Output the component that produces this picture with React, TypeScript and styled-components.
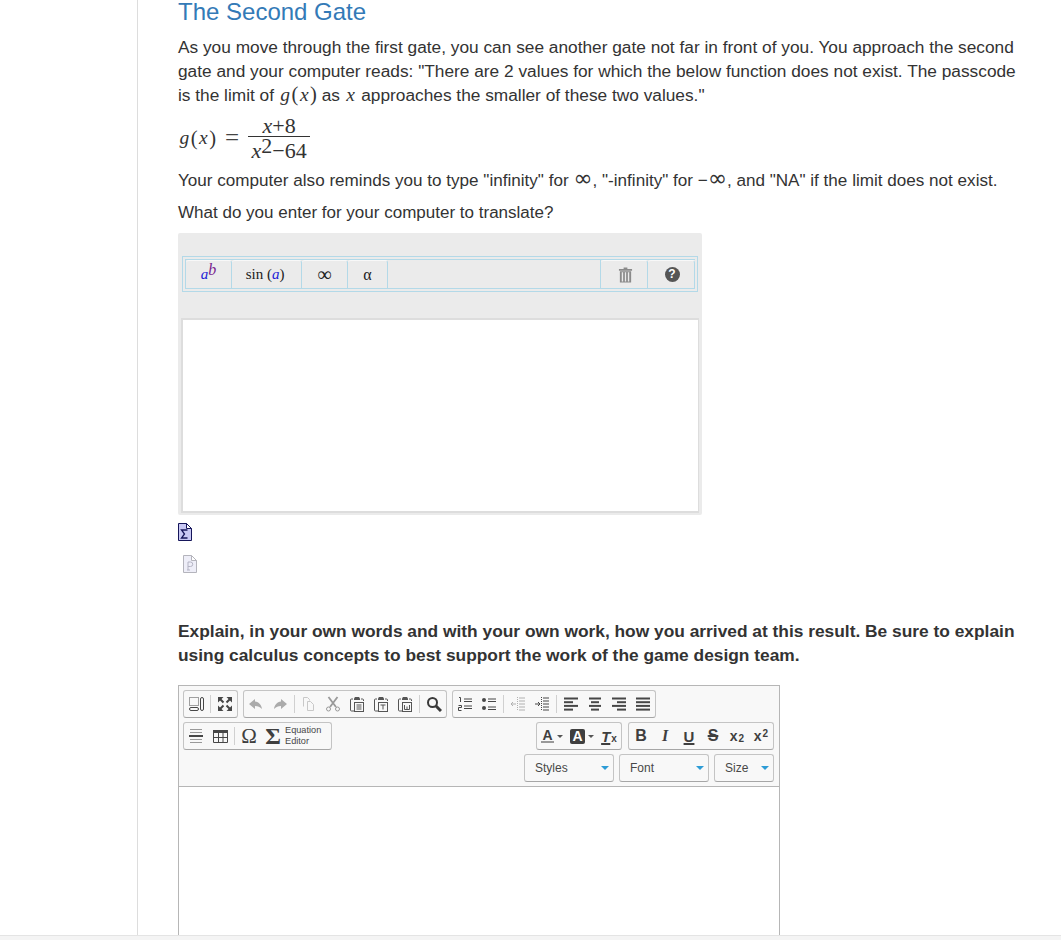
import React from "react";
import styled, { createGlobalStyle } from "styled-components";

const GlobalStyle = createGlobalStyle`
  html, body { margin: 0; padding: 0; height: 100%; background: #fff; }
  body { font-family: "Liberation Sans", Arial, sans-serif; color: #333; }
  #root { height: 100%; }
`;

const Page = styled.div`
  display: flex;
  flex-direction: column;
  height: 940px;
  overflow: hidden;
`;
const Main = styled.div`
  flex: 1;
  min-height: 0;
  display: flex;
  overflow: hidden;
`;
const Sidebar = styled.aside`
  width: 137px;
  flex: none;
  border-right: 1px solid #ddd;
`;
const Content = styled.main`
  width: 840px;
  margin-left: 40px;
  flex: none;
`;
const Footer = styled.footer`
  height: 4px;
  flex: none;
  background: #f4f4f4;
  border-top: 1px solid #e4e4e4;
`;
const Title = styled.h2`
  margin: 0;
  height: 35px;
  font-size: 24px;
  font-weight: 400;
  line-height: 24px;
  color: #337ab7;
`;
const Para = styled.p<{ $mb?: number; $size?: number }>`
  margin: 0 0 ${(p) => p.$mb ?? 8}px;
  font-size: ${(p) => p.$size ?? 17.3}px;
  line-height: 24px;
`;
const Line = styled.span`
  display: block;
  white-space: nowrap;
`;
const Bold = styled(Para)`
  font-size: 17.35px;
  font-weight: 700;
  margin: 0 0 18px;
`;
const Mi = styled.i`
  font-family: "Liberation Serif", serif;
  font-size: 19.5px;
  line-height: 0;
  padding: 0 1.5px;
`;
const Paren = styled.span`
  font-family: "Liberation Serif", serif;
  font-size: 20.5px;
  line-height: 0;
`;
const Formula = styled.div`
  display: flex;
  align-items: center;
  height: 45px;
  margin-bottom: 9px;
  font-family: "Liberation Serif", serif;
  font-size: 22px;
`;
const Equals = styled.span`
  margin: 0 9px 0 9px;
  font-size: 25px;
  color: #444;
`;
const Fraction = styled.span`
  display: inline-flex;
  flex-direction: column;
  align-items: center;
  width: 62px;
`;
const Num = styled.span`
  line-height: 23px;
  height: 22px;
  border-bottom: 1px solid #333;
  align-self: stretch;
  text-align: center;
`;
const Den = styled.span`
  line-height: 28px;
  height: 24px;
  white-space: nowrap;
  sup {
    font-size: 22px;
    line-height: 0;
    vertical-align: 5px;
  }
`;
const Inf = styled.span`
  font-family: "DejaVu Sans", sans-serif;
  font-size: 23px;
  line-height: 0;
`;

const MathBox = styled.section`
  width: 524px;
  height: 282px;
  margin-top: 8px;
  padding: 23px 3px 2px;
  box-sizing: border-box;
  background: #ebebeb;
  border-radius: 2px;
  display: flex;
  flex-direction: column;
`;
const MathBar = styled.div`
  margin: 0 1px;
  height: 36px;
  box-sizing: border-box;
  padding: 2px;
  border: 1px solid #b3d9e8;
`;
const MathRow = styled.div`
  display: flex;
  height: 100%;
  box-sizing: border-box;
  border: 1px solid #b3d9e8;
  border-right: 0;
`;
const MathBtn = styled.div<{ $w: number; $pl?: number; $pr?: number; $size?: number }>`
  width: ${(p) => p.$w}px;
  flex: none;
  display: flex;
  align-items: center;
  justify-content: center;
  box-sizing: border-box;
  padding: 0 ${(p) => p.$pr ?? 0}px 0 ${(p) => p.$pl ?? 0}px;
  border-right: 1px solid #b3d9e8;
  border-top: 1px solid #f8f8f8;
  border-radius: 3px 3px 0 0;
  font-family: "Liberation Serif", serif;
  font-size: ${(p) => p.$size ?? 15}px;
  color: #222;
`;
const MathGap = styled.div`
  flex: 1;
  border-right: 1px solid #b3d9e8;
`;
const Var = styled.i<{ $c: string }>`
  color: ${(p) => p.$c};
`;
const Power = styled.span`
  font-size: 15px;
  font-style: italic;
  color: #2323d6;
  sup {
    color: #7a1e8e;
    font-size: 16px;
    line-height: 0;
    vertical-align: 4px;
  }
`;
const HelpDot = styled.span`
  width: 15px;
  height: 15px;
  border-radius: 50%;
  background: #555;
  color: #fff;
  font: 700 12px/15px "Liberation Sans", sans-serif;
  text-align: center;
`;
const AnswerArea = styled.div`
  flex: 1;
  margin-top: 26px;
  background: #fff;
  border: 2px solid #ddd;
  border-right-width: 1px;
`;
const FileIcons = styled.div`
  display: flex;
  flex-direction: column;
  gap: 14px;
  padding-top: 8px;
  height: 104px;
  box-sizing: border-box;
  svg:last-child {
    margin-left: 5px;
  }
`;

const Editor = styled.section`
  width: 602px;
  height: 400px;
  box-sizing: border-box;
  border: 1px solid #b6b6b6;
`;
const EditorBar = styled.div`
  height: 101px;
  box-sizing: border-box;
  padding: 4px 5px 0 4px;
  background: #f8f8f8;
  border-bottom: 1px solid #b6b6b6;
  display: flex;
  flex-direction: column;
  gap: 4px;
`;
const BarRow = styled.div<{ $end?: boolean; $gap?: number }>`
  display: flex;
  height: 28px;
  gap: ${(p) => p.$gap ?? 5}px;
  justify-content: ${(p) => (p.$end ? "flex-end" : "flex-start")};
`;
const Push = styled.div`
  flex: 1;
`;
const Group = styled.div`
  display: flex;
  align-items: center;
  border: 1px solid #c4c4c4;
  border-bottom-color: #a6a6a6;
  border-radius: 3px;
`;
const Tool = styled.span<{ $w?: number }>`
  width: ${(p) => p.$w ?? 24}px;
  height: 26px;
  flex: none;
  display: flex;
  align-items: center;
  justify-content: center;
  svg {
    display: block;
  }
`;
const Sep = styled.span`
  width: 1px;
  height: 18px;
  margin: 0 2px;
  background: #d0d0d0;
`;
const EqLabel = styled.span`
  font-size: 9.2px;
  line-height: 11px;
  color: #474747;
  margin: 0 10px 0 0;
`;
const Combo = styled.div<{ $w: number }>`
  width: ${(p) => p.$w}px;
  box-sizing: border-box;
  display: flex;
  align-items: center;
  justify-content: space-between;
  padding: 0 4px 0 10px;
  font-size: 12px;
  color: #484848;
  border: 1px solid #c4c4c4;
  border-bottom-color: #a6a6a6;
  border-radius: 3px;
`;
const Caret = styled.span`
  width: 0;
  height: 0;
  border: 4px solid transparent;
  border-top: 4px solid #2d9cd6;
  border-bottom: 0;
`;
const TinyCaret = styled.span`
  width: 0;
  height: 0;
  margin-left: 3px;
  border: 3px solid transparent;
  border-top: 3px solid #555;
  border-bottom: 0;
`;
const EditArea = styled.div`
  height: 298px;
  background: #fff;
`;

const Ico = ({ children, c = "#474747", w = 16, h = 16 }: { children: React.ReactNode; c?: string; w?: number; h?: number }) => (
  <svg width={w} height={h} viewBox={`0 0 ${w} ${h}`} fill="none" stroke={c} strokeWidth="1" color={c}>
    {children}
  </svg>
);

const Blocks = () => (
  <Ico>
    <rect x="1.5" y="1.5" width="9" height="8" strokeDasharray="1 1" />
    <rect x="1.5" y="11.5" width="9" height="3" rx="1.5" />
    <rect x="12.5" y="1.5" width="3" height="13" rx="1.5" />
  </Ico>
);
const Maximize = () => (
  <Ico>
    <path fill="currentColor" stroke="none" d="M1 1h5.500L1 6.500zM15 1H9.500L15 6.500zM1 15h5.500L1 9.500zM15 15H9.500L15 9.500z" />
    <path strokeWidth="2" d="m3 3 3.500 3.500M13 3 9.500 6.500M3 13l3.500-3.500M13 13 9.500 9.500" />
  </Ico>
);
const Undo = () => (
  <Ico c="#ababab">
    <path fill="currentColor" stroke="none" d="M7 3 1 8l6 5v-3c3 0 5 1 7 3-.5-4-3-7-7-7.500z" />
  </Ico>
);
const Redo = () => (
  <Ico c="#ababab">
    <path fill="currentColor" stroke="none" d="m9 3 6 5-6 5v-3c-3 0-5 1-7 3 .5-4 3-7 7-7.500z" />
  </Ico>
);
const Copy = () => (
  <Ico c="#c8c8c8">
    <path d="M2.500 10.500v-9h4l2 2v1M6.500 5.500h3l3 3v6h-6z" />
  </Ico>
);
const Cut = () => (
  <Ico c="#9a9a9a">
    <path strokeWidth="1.800" d="M3.500 1 11 11M12.500 1 5 11" />
    <circle cx="3.500" cy="13" r="2" />
    <circle cx="12.500" cy="13" r="2" />
  </Ico>
);
const Clip = ({ children }: { children?: React.ReactNode }) => (
  <Ico c="#555">
    <path d="M4 3H2.500a1 1 0 0 0-1 1v10a1 1 0 0 0 1 1H5M12 3h1.500a1 1 0 0 1 1 1v1" />
    <path fill="currentColor" stroke="none" d="M5 2.500 6 1h4l1 1.500V4H5z" />
    <rect x="5.500" y="6.500" width="9" height="9" />
    {children}
  </Ico>
);
const Find = () => (
  <Ico c="#3a3a3a">
    <circle cx="6.500" cy="6.500" r="4.500" strokeWidth="2" />
    <path strokeWidth="3" d="m10 10 5 5" />
  </Ico>
);
const Lines = ({ rows, c }: { rows: [number, number][]; c?: string }) => (
  <Ico c={c}>
    {rows.map(([a, b], i) => (
      <path key={i} strokeWidth="2" d={`M${a} ${2.5 + i * 3.7}H${b}`} />
    ))}
  </Ico>
);
const Numbered = () => (
  <Ico>
    <path d="M2 1.500h1.500V6M1.500 9.500h3v2h-3v3h3" />
    <path d="M7 3h8M7 5.500h8M7 10h8M7 12.500h8" />
  </Ico>
);
const Bulleted = () => (
  <Ico>
    <circle cx="3" cy="4" r="2" fill="currentColor" stroke="none" />
    <circle cx="3" cy="12" r="2" fill="currentColor" stroke="none" />
    <path d="M7 3h8M7 5.500h8M7 11h8M7 13.500h8" />
  </Ico>
);
const Indent = ({ c, out }: { c: string; out?: boolean }) => (
  <Ico c={c}>
    <path d="M9 2h6M9 5h6M9 8h6M9 11h6M9 14h6" />
    <path strokeDasharray="1 1" d="M7.500 1v14" />
    <path d={out ? "M6 8H1M3 6 1 8l2 2" : "M1 8h5M4 6l2 2-2 2"} />
  </Ico>
);
const Rule = () => (
  <Ico>
    <path stroke="#999" d="M2 1.500h12M2 4.500h12M2 11.500h12M2 14.500h12" />
    <path strokeWidth="2" d="M1 8h14" />
  </Ico>
);
const Table = () => (
  <Ico>
    <path fill="currentColor" stroke="none" d="M1 2h15v3H1z" />
    <path d="M1.500 2v12.500h14V2M1.500 9.500h14M6.500 5v9.500M11 5v9.500" />
  </Ico>
);
const TextGlyph = styled.span<{ $f?: string; $s?: number; $b?: boolean; $i?: boolean; $u?: boolean; $l?: boolean }>`
  font-family: ${(p) => p.$f ?? '"Liberation Sans", sans-serif'};
  font-size: ${(p) => p.$s ?? 16}px;
  font-weight: ${(p) => (p.$b ? 700 : 400)};
  font-style: ${(p) => (p.$i ? "italic" : "normal")};
  text-decoration: ${(p) => (p.$u ? "underline" : p.$l ? "line-through" : "none")};
  text-decoration-thickness: 2px;
  color: #3f3f3f;
  line-height: 1;
`;
const Small = styled.span`
  font-size: 10px;
  font-weight: 700;
  color: #3f3f3f;
  align-self: flex-end;
  margin: 0 0 5px 1px;
`;
const Raised = styled(Small)`
  align-self: flex-start;
  margin: 5px 0 0 1px;
`;
const ColorA = styled(TextGlyph)`
  border-bottom: 2px solid #999;
  line-height: 12px;
  padding: 0 1px;
`;
const FilledA = styled(TextGlyph)`
  background: #3f3f3f;
  color: #fff;
  border-radius: 2px;
  padding: 1px 2px;
  line-height: 13px;
`;

const SigmaFile = () => (
  <svg width="14" height="18" viewBox="0 0 14 18">
    <path d="M.5.500h8l5 5v12H.5z" fill="#c8c8f4" stroke="#16165a" />
    <path d="M8.500.500v5h5z" fill="#fff" stroke="#16165a" />
    <path d="M9.500 7H3.500l3 4-3 4h6" fill="none" stroke="#16165a" strokeWidth="1.300" />
  </svg>
);
const PFile = () => (
  <svg width="14" height="18" viewBox="0 0 14 18">
    <path d="M.5.500h8l5 5v12H.5z" fill="#eeeef8" stroke="#b4b4bc" />
    <path d="M8.500.500v5h5z" fill="#fff" stroke="#b4b4bc" />
    <path d="M4 15h3M5 15V7h2.500a2 2 0 0 1 0 4.500H5" fill="none" stroke="#b4b4c4" />
  </svg>
);
const Trash = () => (
  <svg width="15" height="16" viewBox="0 0 16 17" fill="#8a8a8a">
    <path d="M1 2h14v2H1zM6 0.500h4V2H6z" />
    <path d="M2 4.500h12V16.500H2zM4 5.500v10h1.500v-10zM7.300 5.500v10h1.400v-10zM10.500 5.500v10H12v-10z" fillRule="evenodd" />
  </svg>
);

const leftLines: [number, number][] = [[1, 15], [1, 10], [1, 15], [1, 10]];
const centerLines: [number, number][] = [[2, 14], [4, 12], [2, 14], [4, 12]];
const rightLines: [number, number][] = [[1, 15], [6, 15], [1, 15], [6, 15]];
const justLines: [number, number][] = [[1, 15], [1, 15], [1, 15], [1, 15]];

export default function App() {
  return (
    <Page>
      <GlobalStyle />
      <Main>
        <Sidebar />
        <Content>
          <Title>The Second Gate</Title>
          <Para>
            <Line>As you move through the first gate, you can see another gate not far in front of you. You approach the second</Line>
            <Line>gate and your computer reads: "There are 2 values for which the below function does not exist. The passcode</Line>
            <Line>
              is the limit of <Mi>g</Mi>
              <Paren>(</Paren>
              <Mi>x</Mi>
              <Paren>)</Paren> as <Mi>x</Mi> approaches the smaller of these two values."
            </Line>
          </Para>
          <Formula>
            <Mi>g</Mi>
            <Paren>(</Paren>
            <Mi>x</Mi>
            <Paren>)</Paren>
            <Equals>=</Equals>
            <Fraction>
              <Num>
                <i>x</i>+8
              </Num>
              <Den>
                <i>x</i>
                <sup>2</sup>−64
              </Den>
            </Fraction>
          </Formula>
          <Para $size={17.1}>
            Your computer also reminds you to type "infinity" for <Inf>∞</Inf>, "-infinity" for −<Inf>∞</Inf>, and "NA" if the
            limit does not exist.
          </Para>
          <Para $mb={0} $size={17.03}>What do you enter for your computer to translate?</Para>
          <MathBox>
            <MathBar>
              <MathRow>
                <MathBtn $w={46}>
                  <Power>
                    a<sup>b</sup>
                  </Power>
                </MathBtn>
                <MathBtn $w={70} $pr={3}>
                  sin&nbsp;(<Var $c="#2323d6">a</Var>)
                </MathBtn>
                <MathBtn $w={46} $size={20}>∞</MathBtn>
                <MathBtn $w={40} $size={16}>α</MathBtn>
                <MathGap />
                <MathBtn $w={47} $pl={3}>
                  <Trash />
                </MathBtn>
                <MathBtn $w={47} $pl={2}>
                  <HelpDot>?</HelpDot>
                </MathBtn>
              </MathRow>
            </MathBar>
            <AnswerArea />
          </MathBox>
          <FileIcons>
            <SigmaFile />
            <PFile />
          </FileIcons>
          <Bold>
            Explain, in your own words and with your own work, how you arrived at this result. Be sure to explain using
            calculus concepts to best support the work of the game design team.
          </Bold>
          <Editor>
            <EditorBar>
              <BarRow>
                <Group>
                  <Tool><Blocks /></Tool>
                  <Sep />
                  <Tool><Maximize /></Tool>
                </Group>
                <Group>
                  <Tool><Undo /></Tool>
                  <Tool><Redo /></Tool>
                  <Sep />
                  <Tool><Copy /></Tool>
                  <Tool><Cut /></Tool>
                  <Tool><Clip><path d="M7.500 9h5M7.500 11h5M7.500 13h5" /></Clip></Tool>
                  <Tool><Clip><path d="M7.500 9h5M10 9v4.500" /></Clip></Tool>
                  <Tool><Clip><path d="M7.500 9v4.500h5V9M10 10.500v3" /></Clip></Tool>
                  <Sep />
                  <Tool><Find /></Tool>
                </Group>
                <Group>
                  <Tool><Numbered /></Tool>
                  <Tool><Bulleted /></Tool>
                  <Sep />
                  <Tool><Indent c="#b0b0b0" out /></Tool>
                  <Tool><Indent c="#474747" /></Tool>
                  <Sep />
                  <Tool><Lines rows={leftLines} /></Tool>
                  <Tool><Lines rows={centerLines} /></Tool>
                  <Tool><Lines rows={rightLines} /></Tool>
                  <Tool><Lines rows={justLines} /></Tool>
                </Group>
              </BarRow>
              <BarRow $gap={6}>
                <Group>
                  <Tool><Rule /></Tool>
                  <Tool><Table /></Tool>
                  <Sep />
                  <Tool>
                    <TextGlyph $f='"Liberation Serif", serif' $s={21}>Ω</TextGlyph>
                  </Tool>
                  <Tool>
                    <TextGlyph $f='"Liberation Serif", serif' $s={24} $b>Σ</TextGlyph>
                  </Tool>
                  <EqLabel>
                    Equation
                    <br />
                    Editor
                  </EqLabel>
                </Group>
                <Push />
                <Group>
                  <Tool $w={30}>
                    <ColorA $b $s={14}>A</ColorA>
                    <TinyCaret />
                  </Tool>
                  <Tool $w={30}>
                    <FilledA $b $s={14}>A</FilledA>
                    <TinyCaret />
                  </Tool>
                  <Tool>
                    <TextGlyph $b $i $s={15} $u>T</TextGlyph>
                    <Small>x</Small>
                  </Tool>
                </Group>
                <Group>
                  <Tool><TextGlyph $b>B</TextGlyph></Tool>
                  <Tool><TextGlyph $b $i $f='"Liberation Serif", serif'>I</TextGlyph></Tool>
                  <Tool><TextGlyph $b $s={15} $u>U</TextGlyph></Tool>
                  <Tool><TextGlyph $b $l>S</TextGlyph></Tool>
                  <Tool>
                    <TextGlyph $b $s={14}>x</TextGlyph>
                    <Small>2</Small>
                  </Tool>
                  <Tool>
                    <TextGlyph $b $s={14}>x</TextGlyph>
                    <Raised>2</Raised>
                  </Tool>
                </Group>
              </BarRow>
              <BarRow $end>
                <Combo $w={90}>Styles<Caret /></Combo>
                <Combo $w={90}>Font<Caret /></Combo>
                <Combo $w={60}>Size<Caret /></Combo>
              </BarRow>
            </EditorBar>
            <EditArea />
          </Editor>
        </Content>
      </Main>
      <Footer />
    </Page>
  );
}
